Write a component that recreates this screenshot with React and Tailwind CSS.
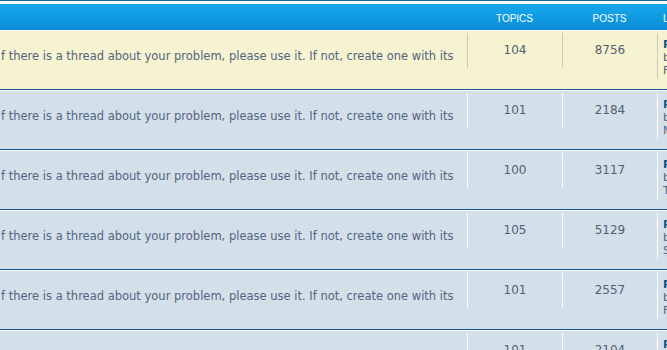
import React from "react";

const rows = [
  { topics: 104, posts: 8756, date: "Fri Jan 12, 2024 9:14 pm", user: "admin", cream: true },
  { topics: 101, posts: 2184, date: "Mon Jan 08, 2024 4:02 pm", user: "moderator" },
  { topics: 100, posts: 3117, date: "Tue Jan 09, 2024 11:47 am", user: "helper" },
  { topics: 105, posts: 5129, date: "Sat Jan 13, 2024 7:30 am", user: "support" },
  { topics: 101, posts: 2557, date: "Fri Jan 12, 2024 2:18 pm", user: "admin" },
  { topics: 101, posts: 2104, date: "Thu Jan 11, 2024 6:55 pm", user: "helper" },
];

const desc =
  "f there is a thread about your problem, please use it. If not, create one with its";

function Row({ r }) {
  const bg = r.cream ? "bg-[#f6f3d0]" : "bg-[#d3e0ea]";
  const div = r.cream ? "border-[#c9c8c0]" : "border-white";
  return (
    <div className={`flex h-[60px] border-t border-b border-t-white border-b-[#105289] ${bg}`}>
      <div className="w-[467px] flex-none overflow-hidden whitespace-nowrap pt-[18px] pl-[1px] text-[11.5px] leading-[14px] text-[#536482]">
        {desc}
      </div>
      <div className={`mt-[2px] h-[35px] w-[95px] flex-none border-l ${div} pt-[9px] text-center text-[12px] leading-[17px] text-[#525f74]`}>
        {r.topics}
      </div>
      <div className={`mt-[2px] h-[35px] w-[95px] flex-none border-l ${div} pt-[9px] text-center text-[12px] leading-[17px] text-[#525f74]`}>
        {r.posts}
      </div>
      <div className={`mt-[2px] h-[46px] w-[200px] flex-none border-l ${div} pt-[5px] pl-[5px] text-[11px] leading-[13px] whitespace-nowrap`}>
        <div className="font-bold text-[#105289]">Re: Need help</div>
        <div className="text-[#536482]">by <span className="text-[#105289]">{r.user}</span></div>
        <div className="text-[#536482]">{r.date}</div>
      </div>
    </div>
  );
}

export default function App() {
  return (
    <div
      className="w-[667px] h-[350px] overflow-hidden bg-white"
      style={{ fontFamily: '"DejaVu Sans", Verdana, sans-serif' }}
    >
      <div className="h-px bg-[#0b6ca4]" />
      <div className="h-[3px] bg-white" />
      <div
        className="flex h-[26px] bg-gradient-to-b from-[#14a8ef] to-[#0c8dd5] pt-[3px] text-[10px] leading-[23px] text-white whitespace-nowrap"
        style={{ fontFamily: '"Liberation Sans", Arial, sans-serif' }}
      >
        <div className="w-[467px] flex-none" />
        <div className="w-[95px] flex-none text-center">TOPICS</div>
        <div className="w-[95px] flex-none text-center">POSTS</div>
        <div className="w-[200px] flex-none pl-[6px]">LAST POST</div>
      </div>
      {rows.map((r, i) => (
        <Row key={i} r={r} />
      ))}
    </div>
  );
}
